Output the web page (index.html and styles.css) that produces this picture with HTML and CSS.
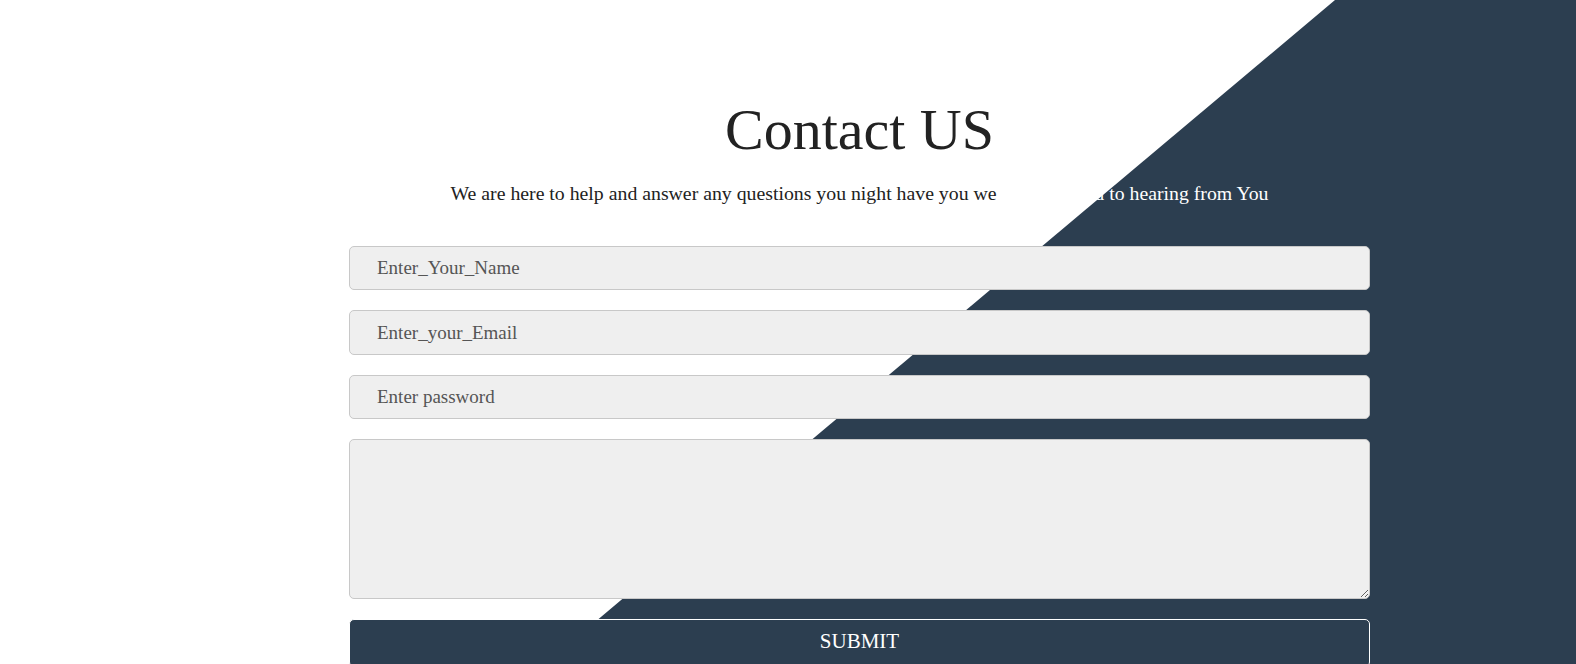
FILE: index.html
```html
<!DOCTYPE html>
<html>
<head>
<meta charset="utf-8">
<link rel="stylesheet" href="styles.css">
</head>
<body>
<div class="bg-shape"></div>
<section class="contact">
  <h1 class="title">Contact US</h1>
  <p class="lead"><span class="lead-dark">We are here to help and answer any questions you night have you we </span><span class="lead-light">look forward to hearing from You</span></p>
  <form class="form">
    <input class="field" type="text" placeholder="Enter_Your_Name">
    <input class="field" type="email" placeholder="Enter_your_Email">
    <input class="field" type="password" placeholder="Enter password">
    <textarea class="field area"></textarea>
    <button class="submit" type="button">SUBMIT</button>
  </form>
</section>
</body>
</html>
```
FILE: styles.css
```css
html, body {
  margin: 0;
  padding: 0;
}
body {
  font-family: "Liberation Serif", "Times New Roman", serif;
  background: #fff;
  overflow: hidden;
  height: 664px;
  position: relative;
}
.bg-shape {
  position: absolute;
  inset: 0;
  background: #2c3e50;
  clip-path: polygon(1335px 0, 100% 0, 100% 100%, 545px 100%);
  z-index: 0;
}
.contact {
  position: relative;
  z-index: 1;
  width: 1021px;
  margin-left: 349px;
  padding-top: 94px;
  display: flex;
  flex-direction: column;
  align-items: stretch;
}
.title {
  margin: 0;
  font-weight: normal;
  font-size: 58px;
  line-height: 72px;
  color: #222;
  text-align: center;
}
.lead {
  margin: 14px 0 0;
  font-size: 19.8px;
  line-height: 26px;
  text-align: center;
}
.lead-dark { color: #222; }
.lead-light { color: #fff; }
.form {
  margin-top: 40px;
  display: flex;
  flex-direction: column;
  gap: 20px;
}
.field {
  box-sizing: border-box;
  width: 100%;
  height: 44.4px;
  margin: 0;
  padding: 0 27px;
  font-family: "Liberation Serif", "Times New Roman", serif;
  font-size: 19px;
  color: #333;
  background: #efefef;
  border: 1px solid #c8c8c8;
  border-radius: 5px;
  outline: none;
}
.field::placeholder { color: #555; }
.area {
  height: 160px;
  padding: 10px 27px;
  resize: vertical;
}
.submit {
  box-sizing: border-box;
  width: 100%;
  height: 48px;
  margin: 0;
  padding: 0 0 4px;
  background: #2c3e50;
  color: #fff;
  border: 1px solid #fff;
  border-radius: 5px;
  font-family: "Liberation Serif", "Times New Roman", serif;
  font-size: 21px;
  cursor: pointer;
}
```
